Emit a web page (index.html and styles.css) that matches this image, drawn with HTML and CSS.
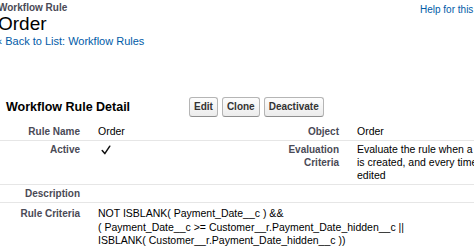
FILE: index.html
```html
<!DOCTYPE html>
<html lang="en">
<head>
  <meta charset="UTF-8" />
  <title>Workflow Rule: Order</title>
  <link rel="stylesheet" href="styles.css">
</head>
<body>

<!-- Page header -->
<div class="page-head">
  <div class="title-block">
    <div class="type">Workflow Rule</div>
    <h1>Order</h1>
    <a class="back" href="#">&laquo; Back to List: Workflow Rules</a>
  </div>
  <a class="help" href="#">Help for this Page</a>
</div>

<!-- Detail block -->
<div class="detail">
  <div class="detail-head">
    <h2>Workflow Rule Detail</h2>
    <div class="buttons">
      <button class="btn">Edit</button>
      <button class="btn">Clone</button>
      <button class="btn">Deactivate</button>
    </div>
  </div>

  <table class="detail-list">
    <colgroup>
      <col class="c-label1">
      <col class="c-data1">
      <col class="c-label2">
      <col class="c-data2">
    </colgroup>
    <tr>
      <td class="label">Rule Name</td>
      <td class="data">Order</td>
      <td class="label">Object</td>
      <td class="data">Order</td>
    </tr>
    <tr>
      <td class="label">Active</td>
      <td class="data">
        <svg class="check" width="10" height="10" viewBox="0 0 10 10">
          <path d="M1.2 5.6 L3.8 8.6 L8.8 1.2" fill="none" stroke="#111" stroke-width="1.5" stroke-linecap="round" stroke-linejoin="round"/>
        </svg>
      </td>
      <td class="label">Evaluation Criteria</td>
      <td class="data">Evaluate the rule when a record is created, and every time it's edited</td>
    </tr>
    <tr>
      <td class="label">Description</td>
      <td class="data" colspan="3"></td>
    </tr>
    <tr class="last">
      <td class="label">Rule Criteria</td>
      <td class="data" colspan="3">NOT ISBLANK( Payment_Date__c ) &amp;&amp;<br>( Payment_Date__c &gt;= Customer__r.Payment_Date_hidden__c ||<br>ISBLANK( Customer__r.Payment_Date_hidden__c ))</td>
    </tr>
  </table>
</div>

</body>
</html>
```

FILE: styles.css
```css
body {
  margin: 0;
  font-family: "Liberation Sans", Arial, sans-serif;
  color: #000;
  background: #fff;
  overflow: hidden;
}
.page-head {
  display: flex;
  align-items: flex-start;
  margin-left: -2px;
}
.title-block {
  flex: 0 0 422px;
}
.type {
  font-size: 10px;
  font-weight: bold;
  line-height: 12px;
  color: #4a4a56;
  padding-top: 2px;
}
h1 {
  margin: -1px 0 0;
  font-size: 19px;
  font-weight: normal;
  line-height: 22px;
}
.back {
  display: block;
  margin-left: -2px;
  font-size: 11px;
  line-height: 13px;
  color: #015ba7;
  text-decoration: none;
}
.help {
  font-size: 10px;
  line-height: 12px;
  color: #015ba7;
  text-decoration: none;
  margin-top: 4px;
  white-space: nowrap;
}
.detail {
  margin-top: 48px;
  padding-left: 6px;
}
.detail-head {
  display: flex;
  align-items: center;
  height: 22px;
}
h2 {
  margin: 0;
  width: 183px;
  font-size: 12.5px;
  font-weight: bold;
  color: #000;
}
.buttons {
  display: flex;
  gap: 4px;
}
.btn {
  font-family: "Liberation Sans", Arial, sans-serif;
  font-size: 10px;
  font-weight: bold;
  line-height: 12px;
  color: #333;
  padding: 3px 4px;
  background: linear-gradient(#fdfdfd, #ececec);
  border: 1px solid #b5b5b5;
  border-bottom-color: #8f8f8f;
  border-radius: 3px;
}
.detail-list {
  border-collapse: collapse;
  table-layout: fixed;
  width: 512px;
  margin: 5px 0 0 -6px;
}
.c-label1 { width: 98px; }
.c-data1 { width: 185px; }
.c-label2 { width: 74px; }
.c-data2 { width: 155px; }
.detail-list td {
  border-bottom: 1px solid #e6e6e6;
  vertical-align: top;
  padding: 2px 0;
  line-height: 13px;
}
.detail-list tr.last td {
  border-bottom: none;
  padding-top: 4px;
  line-height: 13.5px;
}
.label {
  font-size: 10px;
  font-weight: bold;
  color: #4a4a56;
  text-align: right;
  padding-right: 18px !important;
}
.data {
  font-size: 10.5px;
  color: #000;
}
.check {
  display: block;
  margin: 2px 0 0 3px;
}
```
